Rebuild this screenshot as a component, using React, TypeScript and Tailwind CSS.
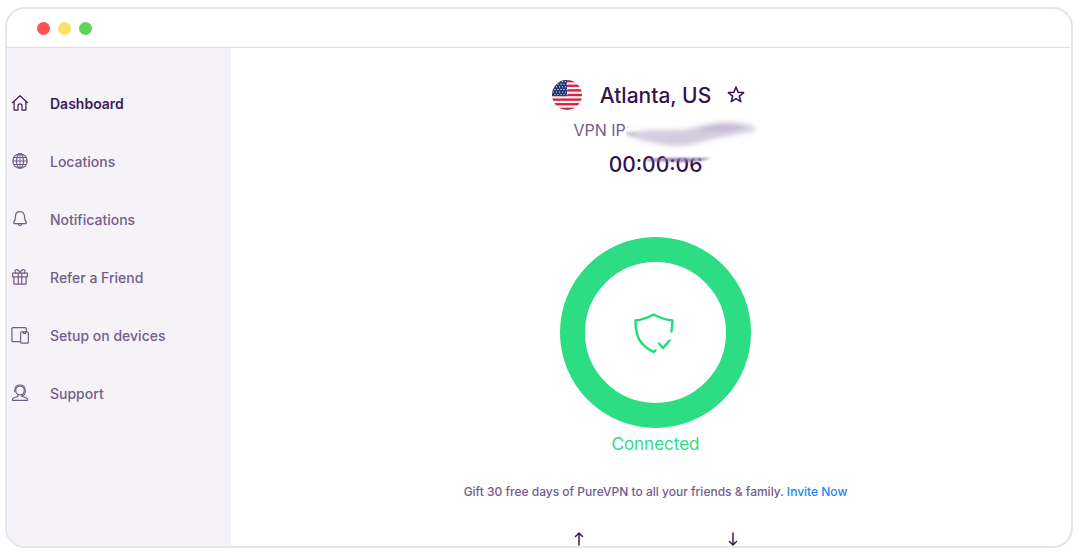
import type { ReactNode } from "react";

function Icon({ children }: { children: ReactNode }) {
  return (
    <svg
      viewBox="0 0 20 20"
      className="h-5 w-5 shrink-0"
      fill="none"
      stroke="currentColor"
      strokeWidth="1.2"
      strokeLinecap="round"
      strokeLinejoin="round"
      aria-hidden="true"
    >
      {children}
    </svg>
  );
}

const navItems: { label: string; icon: ReactNode; active?: boolean }[] = [
  {
    label: "Dashboard",
    active: true,
    icon: <path d="M2.4 9.7 10 2.7l7.600 7M4.100 8.400V17.100h3.900v-4.300a2 2 0 0 1 4 0v4.300h3.900V8.400" />,
  },
  {
    label: "Locations",
    icon: (
      <>
        <circle cx="10" cy="10" r="7.200" />
        <ellipse cx="10" cy="10" rx="3.500" ry="7.200" />
        <path d="M10 2.800v14.400M2.800 10h14.400M3.900 6.500h12.200M3.900 13.500h12.200" strokeWidth="1" />
      </>
    ),
  },
  {
    label: "Notifications",
    icon: (
      <>
        <path d="M10 2.700c-2.900 0-4.500 2.100-4.500 4.700 0 3.600-1 4.800-1.700 5.800-.4.700-.1 1.500.8 1.500h10.800c.9 0 1.200-.8.8-1.500-.7-1-1.700-2.200-1.700-5.800 0-2.600-1.600-4.700-4.500-4.700Z" />
        <path d="M8.200 14.900a1.850 1.850 0 0 0 3.600 0" />
      </>
    ),
  },
  {
    label: "Refer a Friend",
    icon: (
      <>
        <path d="M2.600 6.200h14.800v3.600H2.600zM3.900 9.800h12.200v7.400H3.900zM8.300 6.200v11M11.700 6.200v11" />
        <path d="M10 6C8.800 3.200 7.300 2.300 6 2.700 4.500 3.200 4.800 5.600 6 6M10 6c1.200-2.800 2.700-3.700 4-3.300 1.500.5 1.200 2.900 0 3.300" />
      </>
    ),
  },
  {
    label: "Setup on devices",
    icon: (
      <>
        <path d="M10.600 16.700H2.700a.8.8 0 0 1-.8-.8V3.400a.8.8 0 0 1 .8-.8h12.800a.8.8 0 0 1 .8.8v3.500" />
        <rect x="10.600" y="6.900" width="7.800" height="11.300" rx="1" />
        <path d="M13.500 7.200v1.200h2V7.200" />
      </>
    ),
  },
  {
    label: "Support",
    icon: (
      <>
        <circle cx="10" cy="7.500" r="4.300" />
        <path d="M4.800 8.800V6.800C5.200 3.900 7.200 2 10 2s4.800 1.900 5.200 4.800v2M15.200 8.800c0 2.400-1.300 3.800-3.700 4.200" />
        <path d="M7.800 11.700v1.800l-4.300 1.500c-.9.400-1.200 1-1.200 2.300h15.400c0-1.300-.3-1.900-1.200-2.300l-4.300-1.500v-1.800" />
      </>
    ),
  },
];

function Flag() {
  const stars = [];
  for (let row = 0; row < 6; row++) {
    for (let col = 0; col < 5; col++) {
      stars.push(
        <circle key={`${row}-${col}`} cx={1.5 + col * 3 + (row % 2) * 1.5} cy={1.6 + row * 2.6} r="0.600" fill="#fff" />,
      );
    }
  }
  return (
    <svg viewBox="0 0 30 30" className="h-[30px] w-[30px] shrink-0 rounded-full" role="img" aria-label="United States">
      <rect width="30" height="30" fill="#f7f3f5" />
      {[0, 1, 2, 3, 4, 5, 6].map((i) => (
        <rect key={i} y={i * 4.615} width="30" height="2.308" fill="#d8203f" />
      ))}
      <rect width="15" height="16.150" fill="#1f3a78" />
      {stars}
    </svg>
  );
}

function Smudge() {
  return (
    <svg viewBox="0 0 160 64" className="pointer-events-none absolute top-[-16px] left-[52px] h-16 w-40" aria-hidden="true">
      <defs>
        <filter id="soft" x="-20%" y="-60%" width="140%" height="220%">
          <feGaussianBlur stdDeviation="2.600" />
        </filter>
        <filter id="fine" x="-20%" y="-100%" width="140%" height="300%">
          <feGaussianBlur stdDeviation="1.800" />
        </filter>
      </defs>
      <rect x="1" y="20" width="9" height="18" fill="#fff" opacity="0.800" />
      <path
        d="M2 31C18 27 34 29 52 28S84 19 104 20s34 7 20 10-34 5-52 11S30 43 2 34Z"
        fill="#d3ccdf"
        filter="url(#soft)"
      />
      <path d="M72 27c16-5 30-6 46-1-14 4-30 5-46 1Z" fill="#b5a6c8" opacity="0.400" filter="url(#fine)" />
      <path d="M0 31h10v2H0z" fill="#8c78a4" opacity="0.450" filter="url(#fine)" />
    </svg>
  );
}

function TimerSmear() {
  return (
    <svg viewBox="0 0 80 20" className="pointer-events-none absolute top-0 left-[34px] h-5 w-20" aria-hidden="true">
      <defs>
        <filter id="smear" x="-20%" y="-100%" width="140%" height="300%">
          <feGaussianBlur stdDeviation="1" />
        </filter>
      </defs>
      <path d="M22 1h40v7H22z" fill="#fff" filter="url(#smear)" />
      <path d="M4 8C24 6 44 7 68 7 58 11 46 12 34 11S14 11 4 10Z" fill="#6d5488" opacity="0.650" filter="url(#smear)" />
    </svg>
  );
}

function Arrow({ down = false }: { down?: boolean }) {
  return (
    <svg
      viewBox="0 0 10 14"
      className="h-[14px] w-[10px]"
      fill="none"
      stroke="currentColor"
      strokeWidth="1.500"
      strokeLinecap="round"
      strokeLinejoin="round"
      role="img"
      aria-label={down ? "Download" : "Upload"}
    >
      <path d={down ? "M5 1v12M1.500 9.500 5 13l3.500-3.500" : "M5 13V1M1.500 4.500 5 1l3.500 3.500"} />
    </svg>
  );
}

export default function App() {
  return (
    <div className="flex h-screen bg-white pt-[7px] pr-[7px] pb-[6px] pl-[5px] font-['Inter','Liberation_Sans',sans-serif] text-[#735d8a]">
      <div className="flex min-w-0 flex-1 flex-col overflow-hidden rounded-[20px] border-2 border-[#e5e6e8]">
        <header className="flex h-[39px] shrink-0 items-center gap-2 border-b border-[#dedee0] pl-[30px]">
          <span className="h-[13px] w-[13px] rounded-full bg-[#fb5151]" />
          <span className="h-[13px] w-[13px] rounded-full bg-[#fae069]" />
          <span className="h-[13px] w-[13px] rounded-full bg-[#5fd45c]" />
        </header>
        <div className="flex min-h-0 flex-1">
          <nav className="w-56 shrink-0 bg-[#f5f3f7] pt-[26px]">
            <ul>
              {navItems.map((item) => (
                <li key={item.label}>
                  <a
                    href="#"
                    className={
                      item.active
                        ? "flex h-[58px] items-center gap-5 pl-[3px] text-[14px] font-semibold text-[#3b1a5a]"
                        : "flex h-[58px] items-center gap-5 pl-[3px] text-[14px] font-medium text-[#735d8a]"
                    }
                  >
                    <Icon>{item.icon}</Icon>
                    {item.label}
                  </a>
                </li>
              ))}
            </ul>
          </nav>
          <main className="flex min-w-0 flex-1 flex-col items-center pt-8 pl-[9px]">
            <div className="flex h-[30px] shrink-0 items-center pr-[14px]">
              <Flag />
              <h1 className="ml-[18px] pt-[2px] text-[21px] leading-[28px] font-medium text-[#35134f]">Atlanta, US</h1>
              <button type="button" aria-label="Add to favourites" className="ml-4 text-[#35134f]">
                <svg
                  viewBox="0 0 18 18"
                  className="h-[18px] w-[18px]"
                  fill="none"
                  stroke="currentColor"
                  strokeWidth="1.500"
                  strokeLinejoin="round"
                  aria-hidden="true"
                >
                  <path d="m9 1 2.100 5.200 5.600.4-4.300 3.600 1.400 5.500L9 12.700l-4.800 3 1.400-5.500-4.300-3.600 5.600-.4Z" />
                </svg>
              </button>
            </div>
            <div className="relative mt-2 flex h-6 w-[164px] shrink-0 items-center text-[16px]">
              VPN IP:
              <Smudge />
            </div>
            <div className="relative mt-[9px] flex h-7 shrink-0 items-center text-[21px] font-medium text-[#35134f]">
              00:00:06
              <TimerSmear />
            </div>
            <button
              type="button"
              aria-label="Disconnect"
              className="mt-[58px] flex h-[191px] w-[191px] shrink-0 items-center justify-center rounded-full border-[25px] border-[#2cdd83]"
            >
              <svg
                viewBox="0 0 44 44"
                className="h-11 w-11"
                fill="none"
                stroke="#20dc78"
                strokeWidth="2.400"
                strokeLinecap="round"
                strokeLinejoin="round"
                aria-hidden="true"
              >
                <path d="M37.500 20.500 38.500 9.500C31 9 25.500 6.500 19.500 3.500 14 6.500 8 9 1.500 9.500 1.500 26 6 34 19.500 41l2-1.500" />
                <path d="m25 32.500 4 4.500 6.500-7.500" />
              </svg>
            </button>
            <p className="mt-1 h-6 shrink-0 text-[17px] leading-6 text-[#2cdd83]">Connected</p>
            <p className="mt-[26px] h-5 shrink-0 text-[12px] leading-5 font-medium whitespace-nowrap">
              Gift 30 free days of PureVPN to all your friends &amp; family.{" "}
              <a href="#" className="text-[#1a86f5]">
                Invite Now
              </a>
            </p>
            <div className="mt-[30px] flex shrink-0 gap-36 text-[#3b1a5a]">
              <Arrow />
              <Arrow down />
            </div>
          </main>
        </div>
      </div>
    </div>
  );
}
